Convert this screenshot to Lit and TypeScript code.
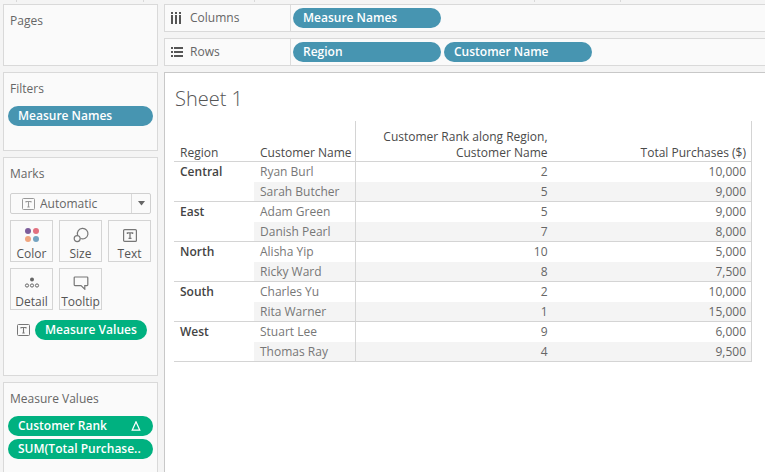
import { LitElement, html, css, svg, nothing } from "lit";
import { customElement, property } from "lit/decorators.js";

const textIcon = html`<svg width="13" height="12" viewBox="0 0 13 12" aria-hidden="true">
  <rect x=".5" y=".5" width="12" height="11" rx="1" fill="none" stroke="currentColor" />
  <path d="M4 4.600V3.500h5v1.100M6.500 3.500v5.500M5.300 9h2.400" fill="none" stroke="currentColor" stroke-width="1.100" />
</svg>`;

const icons: Record<string, unknown> = {
  Color: html`<svg width="16" height="16" viewBox="0 0 16 16" aria-hidden="true">
    <circle cx="4" cy="4" r="3" fill="#7d5d9b" /><circle cx="12" cy="4" r="3" fill="#e2707f" />
    <circle cx="4" cy="12" r="3" fill="#f0a57f" /><circle cx="12" cy="12" r="3" fill="#73a3c1" />
  </svg>`,
  Size: html`<svg width="16" height="16" viewBox="0 0 16 16" aria-hidden="true" fill="none" stroke="#777" stroke-width="1.200">
    <path d="M4.600 8.200A5.300 5.300 0 1 1 7.600 11.500" /><circle cx="4.200" cy="11.600" r="3" />
  </svg>`,
  Text: html`<svg width="14" height="13" viewBox="0 0 14 13" aria-hidden="true" fill="none" stroke="#777">
    <rect x=".6" y=".6" width="12.800" height="11.800" rx="1" stroke-width="1.200" />
    <path d="M4.400 5V3.900h5.200V5M7 3.900v5.400M5.500 9.300h3" stroke-width="1.300" />
  </svg>`,
  Detail: html`<svg width="16" height="12" viewBox="0 0 16 12" aria-hidden="true" fill="none" stroke="#666">
    <circle cx="8" cy="2.500" r="2" fill="#666" stroke="none" />
    <circle cx="3" cy="8.500" r="1.600" /><circle cx="8" cy="8.500" r="1.600" /><circle cx="13" cy="8.500" r="1.600" />
  </svg>`,
  Tooltip: html`<svg width="16" height="14" viewBox="0 0 16 14" aria-hidden="true" fill="none" stroke="#777" stroke-width="1.200">
    <path d="M2 1h12q.8 0 .8.800v7q0 .8-.8.800h-2.200v3.600L8 9.600H2q-.8 0-.8-.8v-7Q1.200 1 2 1Z" />
  </svg>`,
  Columns: html`<svg width="12" height="12" viewBox="0 0 12 12" aria-hidden="true" fill="#555">
    ${[0, 4, 8].map((x) => svg`<rect x=${x} y="0" width="2" height="2" /><rect x=${x} y="3" width="2" height="9" />`)}
  </svg>`,
  Rows: html`<svg width="12" height="12" viewBox="0 0 12 12" aria-hidden="true" fill="#555">
    ${[1, 5, 9].map((y) => svg`<rect x="0" y=${y} width="2" height="2" /><rect x="3" y=${y} width="9" height="2" />`)}
  </svg>`,
};

const shared = css`
  * { box-sizing: border-box; }
  button { font: inherit; margin: 0; cursor: pointer; }
  svg { display: block; flex: none; }
`;

@customElement("field-pill")
class FieldPill extends LitElement {
  @property() label = "";
  @property() kind = "dimension";
  @property({ type: Boolean }) delta = false;

  static styles = [shared, css`
    :host { display: block; min-width: 0; }
    .pill {
      display: flex; align-items: center; justify-content: space-between;
      width: 100%; height: 20px; padding: 0 10px; border: 0; border-radius: 10px;
      background: #4795b1; color: #fff; font-weight: 600; line-height: 20px;
      white-space: nowrap; text-align: left;
    }
    .measure { background: #00b180; }
    .delta { margin-right: 2px; }
  `];

  render() {
    return html`<button class="pill ${this.kind}" type="button"><span>${this.label}</span>${this.delta
      ? html`<svg class="delta" width="10" height="10" viewBox="0 0 10 10" role="img" aria-label="Table calculation">
          <path d="M5 .800 8.800 9.200H1.200Z" fill="none" stroke="#fff" stroke-width="1.200" /></svg>`
      : nothing}</button>`;
  }
}

@customElement("field-shelf")
class FieldShelf extends LitElement {
  @property() label = "";
  @property({ type: Array }) fields: string[] = [];

  static styles = [shared, css`
    :host { display: block; }
    .shelf {
      display: flex; height: 28px; border: 1px solid #d9d9d9; border-right: 0; background: #fafafa;
    }
    .name {
      display: flex; align-items: center; gap: 7px; flex: none; width: 126px; padding-left: 6px;
      border-right: 1px solid #dcdcdc; color: #666;
    }
    .fields { display: flex; align-items: center; gap: 3px; padding-left: 2px; }
    .field { width: 148px; }
  `];

  render() {
    return html`<div class="shelf">
      <div class="name">${icons[this.label]}<span>${this.label}</span></div>
      <div class="fields">${this.fields.map((f) => html`<field-pill class="field" label=${f}></field-pill>`)}</div>
    </div>`;
  }
}

const groups = [
  { region: "Central", rows: [["Ryan Burl", "2", "10,000"], ["Sarah Butcher", "5", "9,000"]] },
  { region: "East", rows: [["Adam Green", "5", "9,000"], ["Danish Pearl", "7", "8,000"]] },
  { region: "North", rows: [["Alisha Yip", "10", "5,000"], ["Ricky Ward", "8", "7,500"]] },
  { region: "South", rows: [["Charles Yu", "2", "10,000"], ["Rita Warner", "1", "15,000"]] },
  { region: "West", rows: [["Stuart Lee", "9", "6,000"], ["Thomas Ray", "4", "9,500"]] },
];

@customElement("sheet-view")
class SheetView extends LitElement {
  static styles = [shared, css`
    :host {
      display: block; flex: 1; padding: 12px 13px 12px 9px; background: #fff;
      border-top: 1px solid #c8c8c8; border-left: 1px solid #c8c8c8;
    }
    h1 {
      margin: 0 0 8px 1px; font-size: 20px; line-height: 28px; font-weight: 300; color: #555;
    }
    table {
      width: 100%; table-layout: fixed; border-collapse: separate; border-spacing: 0;
      border-right: 1px solid #d4d4d4; font-size: 12px; line-height: 16px;
    }
    .region { width: 80px; }
    .customer { width: 102px; }
    th, td { padding: 0 6px; text-align: left; vertical-align: top; white-space: nowrap; }
    thead th {
      height: 41px; vertical-align: bottom; color: #4a4a4a; font-weight: 500;
      border-bottom: 1px solid #d4d4d4;
    }
    tbody th { color: #444; font-weight: 600; line-height: 19px; border-bottom: 1px solid #d4d4d4; }
    td { height: 20px; line-height: 19px; color: #777; }
    .divided { border-right: 1px solid #d4d4d4; padding-right: 0; }
    .number { text-align: right; color: #666; }
    thead .number { color: #4a4a4a; }
    .last { padding-right: 5px; }
    .banded td { background: #f4f4f4; border-bottom: 1px solid #d4d4d4; }
  `];

  render() {
    return html`<h1>Sheet 1</h1>
      <table>
        <colgroup><col class="region" /><col class="customer" /><col /><col /></colgroup>
        <thead><tr>
          <th scope="col">Region</th>
          <th scope="col" class="divided">Customer Name</th>
          <th scope="col" class="number">Customer Rank along Region,<br />Customer Name</th>
          <th scope="col" class="number last">Total Purchases ($)</th>
        </tr></thead>
        <tbody>${groups.map((g) => g.rows.map(([name, rank, total], i) => html`<tr class=${i ? "banded" : ""}>
          ${i ? nothing : html`<th scope="rowgroup" rowspan=${g.rows.length}>${g.region}</th>`}
          <td class="divided">${name}</td><td class="number">${rank}</td><td class="number last">${total}</td>
        </tr>`))}</tbody>
      </table>`;
  }
}

@customElement("app-root")
class AppRoot extends LitElement {
  static styles = [shared, css`
    :host {
      display: flex; min-height: 100vh; padding-right: 3px;
      background: #fff; color: #555;
      font-family: "Open Sans", "Noto Sans", sans-serif; font-size: 12px; line-height: 16px;
    }
    .workspace { display: flex; flex: 1; min-width: 0; margin-bottom: 4px; background: #f4f4f4; }
    .side { display: flex; flex-direction: column; gap: 6px; flex: none; width: 164px; padding: 0 6px 0 3px; }
    .main { display: flex; flex-direction: column; gap: 6px; flex: 1; min-width: 0; }
    .ticks { display: grid; grid-template-columns: 91px 280px 86px; height: 4px; margin-bottom: -6px; }
    .side .ticks { grid-template-columns: 14px 127px; }
    .ticks span { height: 2px; border-right: 1px solid #d9d9d9; }
    .card { border: 1px solid #d9d9d9; background: #fafafa; padding: 7px 4px; }
    .card h2 { margin: 0 2px 8px; font-size: 12px; line-height: 18px; font-weight: 400; color: #666; }
    .pages { min-height: 62px; }
    .filters { min-height: 79px; }
    .marks { min-height: 219px; }
    .marks h2 { margin-bottom: 10px; }
    .values { flex: 1; min-height: 90px; border-bottom: 0; }
    .stack { display: grid; gap: 3px; }
    .combo {
      display: flex; align-items: center; height: 21px; margin: 0 2px 6px; padding-left: 11px;
      border: 1px solid #d0d0d0; border-radius: 2px; color: #999;
    }
    .combo select {
      appearance: none; flex: 1; height: 19px; margin: 0; padding: 0 0 0 5px; border: 0;
      background: none; font: inherit; color: #666; min-width: 0;
    }
    .arrow {
      display: grid; place-items: center; width: 19px; height: 19px;
      border-left: 1px solid #d9d9d9; color: #666; pointer-events: none;
    }
    .buttons { display: grid; grid-template-columns: repeat(3, 43px); gap: 6px; margin: 0 2px 10px; justify-content: space-between; }
    .mark {
      display: flex; flex-direction: column; align-items: center; justify-content: space-between;
      height: 42px; padding: 5px 0 0; border: 1px solid #d4d4d4; background: #fafafa; color: #555; line-height: 14px;
    }
    .glyph { display: grid; place-items: center; height: 18px; }
    .encoded { display: flex; align-items: center; gap: 5px; padding: 0 6px 0 9px; color: #777; }
    .encoded field-pill { flex: 1; }
  `];

  render() {
    return html`<div class="workspace">
      <aside class="side">
        <div class="ticks"><span></span><span></span></div>
        <section class="card pages"><h2>Pages</h2></section>
        <section class="card filters"><h2>Filters</h2><field-pill label="Measure Names"></field-pill></section>
        <section class="card marks">
          <h2>Marks</h2>
          <div class="combo">${textIcon}
            <select aria-label="Mark type"><option>Automatic</option></select>
            <span class="arrow"><svg width="7" height="5" viewBox="0 0 7 5" aria-hidden="true"><path d="M0 0h7L3.500 4.500Z" fill="currentColor" /></svg></span>
          </div>
          <div class="buttons">${["Color", "Size", "Text", "Detail", "Tooltip"].map((name) => html`
            <button class="mark" type="button"><span class="glyph">${icons[name]}</span><span>${name}</span></button>`)}</div>
          <div class="encoded">${textIcon}<field-pill kind="measure" label="Measure Values"></field-pill></div>
        </section>
        <section class="card values">
          <h2>Measure Values</h2>
          <div class="stack">
            <field-pill kind="measure" label="Customer Rank" delta></field-pill>
            <field-pill kind="measure" label="SUM(Total Purchase.."></field-pill>
          </div>
        </section>
      </aside>
      <main class="main">
        <div class="ticks"><span></span><span></span><span></span></div>
        <field-shelf label="Columns" .fields=${["Measure Names"]}></field-shelf>
        <field-shelf label="Rows" .fields=${["Region", "Customer Name"]}></field-shelf>
        <sheet-view></sheet-view>
      </main>
    </div>`;
  }
}
